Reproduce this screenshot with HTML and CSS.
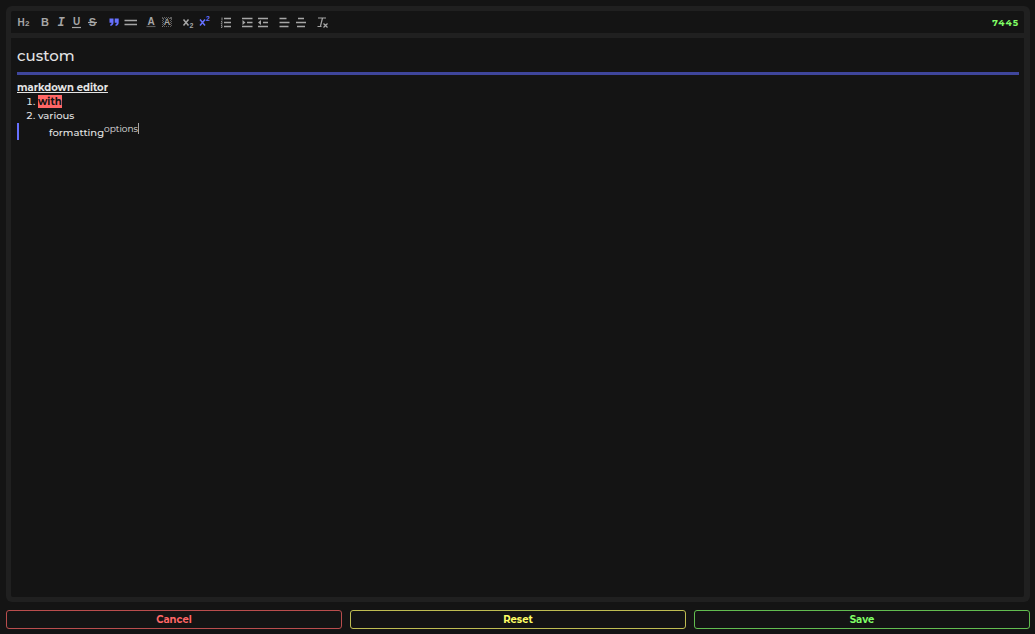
FILE: index.html
```html
<!DOCTYPE html>
<html lang="en">
<head>
<meta charset="utf-8">
<title>Markdown editor</title>
<link rel="stylesheet" href="styles.css">
</head>
<body>
<main class="page">
  <section class="frame">
    <header class="toolbar">
      <div class="group">
        <button type="button" class="tool" aria-label="Heading"><svg viewBox="0 0 16 16"><text x="1.500" y="12" class="g10">H</text><text x="9" y="12" class="g8">2</text></svg></button>
      </div>
      <div class="group">
        <button type="button" class="tool" aria-label="Bold"><svg viewBox="0 0 16 16"><text x="8" y="12" class="g11 mid">B</text></svg></button>
        <button type="button" class="tool" aria-label="Italic"><svg viewBox="0 0 16 16"><text x="8" y="12" class="mono mid">I</text></svg></button>
        <button type="button" class="tool" aria-label="Underline"><svg viewBox="0 0 16 16"><text x="7.500" y="11" class="g10 mid">U</text><path d="M3 13.500h9"/></svg></button>
        <button type="button" class="tool" aria-label="Strikethrough"><svg viewBox="0 0 16 16"><text x="7.500" y="12" class="g11 mid">S</text><path d="M3 8.500h9"/></svg></button>
      </div>
      <div class="group">
        <button type="button" class="tool active" aria-label="Quote"><svg viewBox="0 0 16 16"><path class="solid" d="M3.500 4.500h4v4c0 2-1 3-2.800 3.500l-.8-1.200C5 10.500 5.500 9.800 5.500 8.800h-2zM8.700 4.500h4v4c0 2-1 3-2.800 3.500l-.8-1.200c1.100-.3 1.600-1 1.600-2h-2z"/></svg></button>
        <button type="button" class="tool" aria-label="Divider"><svg viewBox="0 0 16 16"><path class="heavy" d="M2.500 6.500h12.500M2.500 10.500h12.500"/></svg></button>
      </div>
      <div class="group">
        <button type="button" class="tool" aria-label="Text color"><svg viewBox="0 0 16 16"><text x="8" y="11" class="g10 mid">A</text><path class="dim" d="M3.500 12.500h9"/></svg></button>
        <button type="button" class="tool" aria-label="Background color"><svg viewBox="0 0 16 16"><path class="dots" d="M3 3.500h10M3 12.500h10M3.500 4v9M12.500 3v10M4 4.500h9M4.500 5v8M11.500 4v8"/><text x="8" y="11" class="g9 mid">A</text></svg></button>
      </div>
      <div class="group">
        <button type="button" class="tool" aria-label="Subscript"><svg viewBox="0 0 16 16"><path class="heavy" d="M3.500 5.500l5 6M8.500 5.500l-5 6"/><text x="9.500" y="14" class="g7">2</text></svg></button>
        <button type="button" class="tool active" aria-label="Superscript"><svg viewBox="0 0 16 16"><path class="heavy" d="M4 5.500l5 6M9 5.500l-5 6"/><text x="10" y="7" class="g7">2</text></svg></button>
      </div>
      <div class="group">
        <button type="button" class="tool wide" aria-label="Ordered list"><svg viewBox="0 0 16 16"><path class="heavy" d="M6 4.500h7M6 8.500h7M6 12.500h7"/><path class="thin" d="M4 3.500v3M3 7.500h1v1l-1 1.500h1.500M3 11.500h1v2h-1"/></svg></button>
      </div>
      <div class="group">
        <button type="button" class="tool" aria-label="Increase indent"><svg viewBox="0 0 16 16"><path class="heavy" d="M3 4.500h10.500M8 8.500h5.500M3 12.500h10.500"/><path class="solid" d="M3.500 6v5l3-2.500z"/></svg></button>
        <button type="button" class="tool" aria-label="Decrease indent"><svg viewBox="0 0 16 16"><path class="heavy" d="M3 4.500h10M8 8.500h5M3 12.500h10"/><path class="solid" d="M6 6v5L3 8.500z"/></svg></button>
      </div>
      <div class="group">
        <button type="button" class="tool wide" aria-label="Align left"><svg viewBox="0 0 16 16"><path class="heavy" d="M2.500 4.500h7M2.500 8.500h10M2.500 12.500h9"/></svg></button>
        <button type="button" class="tool wide" aria-label="Align center"><svg viewBox="0 0 16 16"><path class="heavy" d="M4 4.500h6M2 8.500h10M3 12.500h8"/></svg></button>
      </div>
      <div class="group">
        <button type="button" class="tool" aria-label="Clear formatting"><svg viewBox="0 0 16 16"><path d="M3 4h8M7.500 4L5.500 12M2.500 12.500h4M8.500 9.500l4 4M12.500 9.500l-4 4"/></svg></button>
      </div>
      <span class="count">7445</span>
    </header>
    <article class="editor" contenteditable="true" spellcheck="false">
      <h2 class="title">custom</h2>
      <p class="lead"><strong>markdown editor</strong></p>
      <ol class="list">
        <li><mark class="mark">with</mark></li>
        <li>various</li>
      </ol>
      <blockquote class="quote">formatting<sup class="sup">options</sup></blockquote>
    </article>
  </section>
  <footer class="actions">
    <button type="button" class="action cancel">Cancel</button>
    <button type="button" class="action reset">Reset</button>
    <button type="button" class="action save">Save</button>
  </footer>
</main>
</body>
</html>
```

FILE: styles.css
```css
* {
  box-sizing: border-box;
}

body {
  margin: 0;
  background: #141414;
  color: #e4e4e4;
  font: 500 10px/15px Montserrat, Inter, "Open Sans", sans-serif;
}

.page {
  display: flex;
  flex-direction: column;
  gap: 8px;
  min-height: 100vh;
  padding: 6px 5px 5px 6px;
}

.frame {
  display: flex;
  flex: 1;
  flex-direction: column;
  gap: 5px;
  padding: 5px 6px 5px 5px;
  border-radius: 6px;
  background: #202020;
}

.toolbar {
  display: flex;
  align-items: center;
  gap: 5px;
  height: 22px;
  padding: 0 5px;
  border-radius: 2px 2px 0 0;
  background: #141414;
}

.group {
  display: flex;
}

.tool {
  display: flex;
  justify-content: center;
  width: 16px;
  padding: 0;
  border: 0;
  background: none;
  color: #a6a6a6;
  cursor: pointer;
}

.wide {
  width: 17px;
}

.active {
  color: #6670ff;
}

.tool svg {
  display: block;
  flex: none;
  width: 16px;
  height: 16px;
  overflow: visible;
}

.tool text {
  fill: currentColor;
  font-weight: 600;
}

.tool path {
  fill: none;
  stroke: currentColor;
  stroke-width: 1.2;
}

.tool .heavy {
  stroke-width: 1.5;
}

.tool .solid {
  fill: currentColor;
  stroke: none;
}

.tool .dim {
  opacity: 0.5;
}

.tool .thin {
  stroke-width: 0.8;
}

.tool .dots {
  opacity: 0.5;
  stroke-width: 1;
  stroke-dasharray: 1 1;
}

.mid {
  text-anchor: middle;
}

.g7 {
  font-size: 7px;
}

.g8 {
  font-size: 8px;
}

.g9 {
  font-size: 9px;
}

.g10 {
  font-size: 10px;
}

.g11 {
  font-size: 11px;
}

.mono {
  font: italic 12px "Liberation Mono", monospace;
}

.count {
  margin-left: auto;
  color: #80ff66;
  font-size: 9px;
  font-weight: 700;
  letter-spacing: 1px;
}

.editor {
  flex: 1;
  padding: 6px 5px 6px 6px;
  border-radius: 0 0 2px 2px;
  background: #141414;
  outline: 0;
}

.title {
  margin: 0 0 5px;
  padding-bottom: 4px;
  border-bottom: 3px solid #3f469c;
  font-size: 15px;
  font-weight: 500;
  line-height: 24px;
}

.lead {
  margin: 0;
  text-decoration: underline;
}

.list {
  margin: 0;
  padding-left: 21px;
}

.list li {
  line-height: 14px;
}

.mark {
  background: #ff6666;
  color: #141414;
  font-weight: 700;
}

.quote {
  margin: 0;
  padding: 1px 0 0 30px;
  border-left: 2px solid #6670ff;
  line-height: 15px;
}

.sup {
  border-right: 1px solid #a6a6a6;
  font-size: 9px;
  font-weight: 400;
  line-height: 9px;
}

.actions {
  display: grid;
  grid-template-columns: repeat(3, 1fr);
  gap: 8px;
}

.action {
  height: 19px;
  padding: 0;
  border: 1px solid;
  border-radius: 3px;
  background: #141414;
  font: 700 10px/15px Montserrat, Inter, "Open Sans", sans-serif;
  cursor: pointer;
}

.cancel {
  border-color: #b94d4d;
  color: #ff6666;
}

.reset {
  border-color: #bfbd52;
  color: #ffff66;
}

.save {
  border-color: #62bd50;
  color: #80ff66;
}
```
